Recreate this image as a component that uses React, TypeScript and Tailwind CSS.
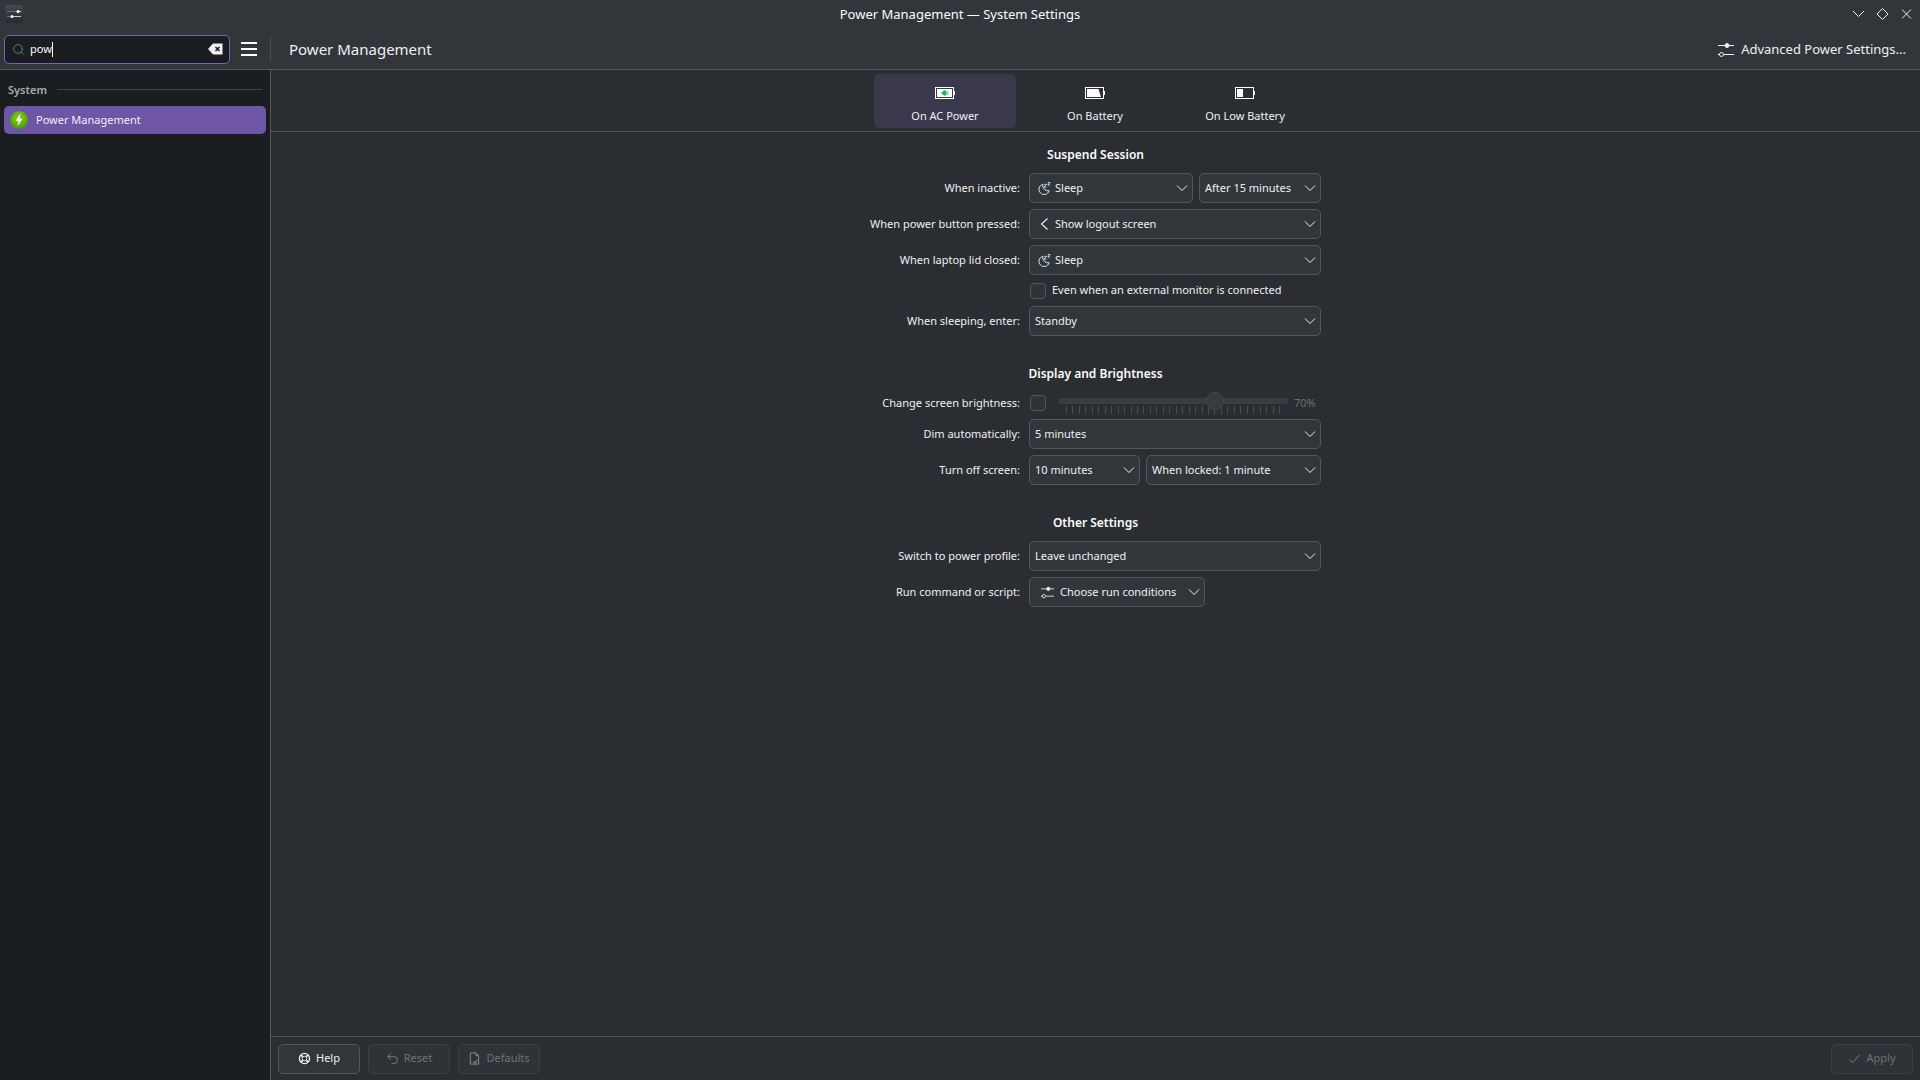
import React from "react";
import { Search } from "lucide-react";

const Chevron = () => (
  <svg width="12" height="8" viewBox="0 0 12 8" fill="none" stroke="#eff0f1" strokeWidth="1" className="shrink-0">
    <path d="M1 1.5 L6 6.5 L11 1.5" />
  </svg>
);

const SleepIcon = () => (
  <svg width="13" height="13" viewBox="0 0 14 14" fill="none" stroke="#eff0f1" strokeWidth="1" className="shrink-0">
    <path d="M5 2.5 A5.6 5.6 0 1 0 12 9.5 A6.2 6.2 0 0 1 5 2.5 Z" />
    <path d="M6.5 2.5 H9 L6.5 5.5 H9" strokeWidth="0.9" />
    <path d="M10.5 0.7 H13 L10.5 3.2 H13" strokeWidth="0.9" />
  </svg>
);

const BackIcon = () => (
  <svg width="14" height="14" viewBox="0 0 14 14" fill="none" stroke="#eff0f1" strokeWidth="1.1" className="shrink-0">
    <path d="M10.5 1.5 L4.5 7 L10.5 12.5" />
  </svg>
);

const Sliders = ({ size = 16 }: { size?: number }) => (
  <svg width={size} height={size} viewBox="0 0 16 16" fill="none" stroke="#eff0f1" strokeWidth="1" className="shrink-0">
    <path d="M0 3.5 H16 M0 12.5 H2 M6 12.5 H16" />
    <circle cx="9" cy="3.5" r="2" fill="#eff0f1" />
    <circle cx="3.5" cy="12.5" r="2" fill="none" />
  </svg>
);

const Battery = ({ level }: { level: "ac" | "full" | "low" }) => (
  <svg width="20" height="12" viewBox="0 0 20 12" className="shrink-0">
    <rect x="0.5" y="0.5" width="18" height="11" fill="none" stroke="#fcfcfc" />
    <rect x="19" y="4" width="1" height="4" fill="#fcfcfc" />
    {level === "ac" && (
      <>
        <rect x="2" y="2" width="15" height="8" fill="#fcfcfc" />
        <path d="M6 6 L9 3.5 H11 V4.5 H13.5 V5.5 H11 V6.5 H13.5 V7.5 H11 V8.5 H9 Z" fill="#27ae60" />
      </>
    )}
    {level === "full" && <path d="M2 2 H13.5 L16 10 H2 Z" fill="#fcfcfc" />}
    {level === "low" && <rect x="2" y="2" width="6" height="8" fill="#fcfcfc" />}
  </svg>
);

const Combo = ({
  text,
  icon,
  className,
}: {
  text: string;
  icon?: React.ReactNode;
  className: string;
}) => (
  <div className={`h-[30px] flex items-center rounded-[5px] border border-[#53575b] bg-[#31363b] pr-[1px] ${className}`}>
    {icon}
    <span className="flex-1 whitespace-nowrap text-[#eff0f1]">{text}</span>
    <span className="w-[18px] flex justify-center">
      <Chevron />
    </span>
  </div>
);

const Row = ({ label, children }: { label: string; children: React.ReactNode }) => (
  <div className="flex items-center gap-[9px]">
    <div className="w-[749px] text-right whitespace-nowrap text-[#eff0f1]">{label}</div>
    {children}
  </div>
);

const Heading = ({ text, className }: { text: string; className: string }) => (
  <div className={`h-[18px] flex items-center justify-center font-semibold text-[12px] text-[#fcfcfc] ${className}`}>{text}</div>
);

const Checkbox = () => (
  <div className="h-[16px] w-[16px] ml-[1px] rounded-[4px] border border-[#53575b] bg-[#2f3338] shrink-0" />
);

const Tab = ({ label, level, active }: { label: string; level: "ac" | "full" | "low"; active?: boolean }) => (
  <div className={`w-[142px] h-[54px] rounded-[5px] flex flex-col items-center pt-[13px] ${active ? "bg-[#3a384c]" : ""}`}>
    <Battery level={level} />
    <div className="mt-[8px] text-[#eff0f1] leading-[18px]">{label}</div>
  </div>
);

const FooterButton = ({
  label,
  icon,
  disabled,
  className,
}: {
  label: string;
  icon: React.ReactNode;
  disabled?: boolean;
  className?: string;
}) => (
  <div
    className={`w-[82px] h-[30px] rounded-[5px] border flex items-center justify-center gap-[5px] ${
      disabled ? "border-[#3c4045] bg-[#2f3338] text-[#6e7276]" : "border-[#53575b] bg-[#31363b] text-[#eff0f1]"
    } ${className ?? ""}`}
  >
    {icon}
    <span>{label}</span>
  </div>
);

const Ticks = () => {
  const ticks = Array.from({ length: 34 });
  return (
    <div className="flex justify-between px-[8px] mt-[2px]">
      {ticks.map((_, i) => (
        <div key={i} className="w-px h-[8px] bg-[#494d51]" />
      ))}
    </div>
  );
};

export default function App() {
  return (
    <div className="h-screen w-screen overflow-hidden flex flex-col bg-[#2a2e32] text-[11px] text-[#eff0f1] font-['Noto_Sans',sans-serif]">
      {/* title bar */}
      <div className="h-[32px] shrink-0 bg-[#31363b] flex items-center relative">
        <div className="ml-[5px] mb-[4px] w-[18px] h-[18px] rounded-[2px] bg-gradient-to-b from-[#45484d] to-[#26292d] flex items-center justify-center">
          <svg width="14" height="14" viewBox="0 0 14 14">
            <path d="M0 4.5 H11" stroke="#7d57c1" strokeWidth="1" />
            <path d="M11 4.5 H14" stroke="#c8c8c8" strokeWidth="1" />
            <path d="M0 9.5 H5" stroke="#7d57c1" strokeWidth="1" />
            <path d="M5 9.5 H14" stroke="#c8c8c8" strokeWidth="1" />
            <circle cx="11" cy="4.5" r="1.5" fill="#fcfcfc" />
            <circle cx="5" cy="9.5" r="1.5" fill="#fcfcfc" />
          </svg>
        </div>
        <div className="flex-1 text-center text-[13px] text-[#fcfcfc] -ml-[23px] -mt-[3px]">Power Management — System Settings</div>
        <div className="absolute right-[0px] top-[0px] h-[28px] flex items-center">
          <svg width="72" height="28" viewBox="0 0 72 28" fill="none" stroke="#eff0f1" strokeWidth="1">
            <path d="M5 11 L10.5 16.5 L16 11" />
            <path d="M29 14 L34.5 8.5 L40 14 L34.5 19.5 Z" />
            <path d="M54 9.5 L63 18.5 M63 9.5 L54 18.5" />
          </svg>
        </div>
      </div>

      {/* toolbar */}
      <div className="h-[38px] shrink-0 bg-[#31363b] border-b border-[#53575b] flex items-center">
        <div className="ml-[4px] w-[226px] h-[29px] mb-[3px] rounded-[5px] border border-[#7d5fb8] bg-[#1b1e20] flex items-center pl-[7px] pr-[6px]">
          <Search size={13} strokeWidth={1.2} className="text-[#9a9d9f] shrink-0" />
          <span className="ml-[5px] text-[#fcfcfc]">pow</span>
          <span className="w-px h-[15px] bg-[#fcfcfc]" />
          <span className="flex-1" />
          <svg width="15" height="12" viewBox="0 0 15 12" className="shrink-0">
            <path d="M5 0.5 H14.5 V11.5 H5 L0 6 Z" fill="#eff0f1" />
            <path d="M7.5 4 L11.5 8 M11.5 4 L7.5 8" stroke="#1b1e20" strokeWidth="1.6" />
          </svg>
        </div>
        <div className="ml-[11px] mb-[3px] w-[16px] flex flex-col gap-[4px]">
          <div className="h-[2px] bg-[#fcfcfc]" />
          <div className="h-[2px] bg-[#fcfcfc]" />
          <div className="h-[2px] bg-[#fcfcfc]" />
        </div>
        <div className="ml-[13px] mb-[3px] w-px h-[26px] bg-[#4a4e52]" />
        <div className="ml-[18px] mb-[3px] text-[15px] text-[#eff0f1]">Power Management</div>
        <div className="flex-1" />
        <div className="mr-[14px] mb-[1px] flex items-center gap-[7px] text-[13px] text-[#eff0f1]">
          <Sliders size={16} />
          <span>Advanced Power Settings...</span>
        </div>
      </div>

      <div className="flex-1 flex min-h-0">
        {/* sidebar */}
        <aside className="w-[271px] shrink-0 bg-[#1b1e20] border-r border-[#53575b] pl-[4px] pr-[4px]">
          <div className="flex items-center h-[36px] pt-[3px] pl-[4px] pr-[4px] gap-[10px]">
            <span className="font-semibold text-[11px] text-[#a8abad] mt-[1px]">System</span>
            <div className="flex-1 h-px bg-[#3f4347]" />
          </div>
          <div className="w-[262px] h-[28px] rounded-[5px] bg-[#6f55a5] flex items-center pl-[6px] gap-[8px]">
            <svg width="18" height="18" viewBox="0 0 18 18" className="shrink-0">
              <defs>
                <radialGradient id="pwr" cx="50%" cy="40%" r="60%">
                  <stop offset="0%" stopColor="#8fd91c" />
                  <stop offset="100%" stopColor="#45980c" />
                </radialGradient>
              </defs>
              <circle cx="9" cy="9" r="9" fill="url(#pwr)" />
              <path d="M10.5 2.5 L5.5 10 H8.3 L7.5 15.5 L12.5 7.8 H9.7 Z" fill="#f2f8e8" />
            </svg>
            <span className="text-[#eff0f1]">Power Management</span>
          </div>
        </aside>

        {/* main */}
        <main className="flex-1 min-w-0 flex flex-col">
          <div className="h-[62px] shrink-0 border-b border-[#53575b] flex justify-center items-start pt-[4px] pr-[1px] gap-[8px]">
            <Tab label="On AC Power" level="ac" active />
            <Tab label="On Battery" level="full" />
            <Tab label="On Low Battery" level="low" />
          </div>

          <div className="flex-1 min-h-0 flex flex-col">
            <Heading text="Suspend Session" className="mt-[14px]" />
            <div className="mt-[9px] flex flex-col gap-[6px]">
              <Row label="When inactive:">
                <div className="flex gap-[6px]">
                  <Combo text="Sleep" icon={<span className="ml-[8px] mr-[4px]"><SleepIcon /></span>} className="w-[164px]" />
                  <Combo text="After 15 minutes" className="w-[122px] pl-[5px]" />
                </div>
              </Row>
              <Row label="When power button pressed:">
                <Combo text="Show logout screen" icon={<span className="ml-[7px] mr-[4px]"><BackIcon /></span>} className="w-[292px]" />
              </Row>
              <Row label="When laptop lid closed:">
                <Combo text="Sleep" icon={<span className="ml-[8px] mr-[4px]"><SleepIcon /></span>} className="w-[292px]" />
              </Row>
              <div className="h-[19px] flex items-center pl-[758px] gap-[6px]">
                <Checkbox />
                <span className="whitespace-nowrap">Even when an external monitor is connected</span>
              </div>
              <Row label="When sleeping, enter:">
                <Combo text="Standby" className="w-[292px] pl-[5px]" />
              </Row>
            </div>

            <Heading text="Display and Brightness" className="mt-[29px]" />
            <div className="mt-[10px] flex flex-col gap-[6px]">
              <Row label="Change screen brightness:">
                <div className="h-[20px] w-[292px] flex items-center">
                  <Checkbox />
                  <div className="ml-[12px] w-[230px] relative pt-[5px] h-[20px]">
                    <div className="h-[6px] rounded-full bg-[#393d42]" />
                    <div className="absolute left-[148px] -top-[1px] w-[18px] h-[18px] rounded-full bg-[#383c41] border border-[#44484c]" />
                    <Ticks />
                  </div>
                  <span className="ml-[6px] text-[#6a6e72] whitespace-nowrap">70%</span>
                </div>
              </Row>
              <Row label="Dim automatically:">
                <Combo text="5 minutes" className="w-[292px] pl-[5px]" />
              </Row>
              <Row label="Turn off screen:">
                <div className="flex gap-[6px]">
                  <Combo text="10 minutes" className="w-[111px] pl-[5px]" />
                  <Combo text="When locked: 1 minute" className="w-[175px] pl-[5px]" />
                </div>
              </Row>
            </div>

            <Heading text="Other Settings" className="mt-[29px]" />
            <div className="mt-[9px] flex flex-col gap-[6px]">
              <Row label="Switch to power profile:">
                <Combo text="Leave unchanged" className="w-[292px] pl-[5px]" />
              </Row>
              <Row label="Run command or script:">
                <Combo text="Choose run conditions" icon={<span className="ml-[11px] mr-[6px]"><Sliders size={13} /></span>} className="w-[176px]" />
              </Row>
            </div>
          </div>

          {/* footer */}
          <div className="h-[44px] shrink-0 border-t border-[#53575b] flex items-center gap-[8px] px-[7px]">
            <FooterButton
              label="Help"
              icon={
                <svg width="13" height="13" viewBox="0 0 14 14" fill="none" stroke="#eff0f1">
                  <circle cx="7" cy="7" r="5.5" strokeWidth="1.4" />
                  <circle cx="7" cy="7" r="2.5" strokeWidth="1" />
                  <path d="M3 3 L5 5 M11 3 L9 5 M3 11 L5 9 M11 11 L9 9" strokeWidth="1.8" />
                </svg>
              }
            />
            <FooterButton
              label="Reset"
              disabled
              icon={
                <svg width="13" height="13" viewBox="0 0 14 14" fill="none" stroke="#7d8185" strokeWidth="1">
                  <path d="M2 5 H8.5 A3.7 3.7 0 0 1 8.5 12.5 H6" />
                  <path d="M5 1.5 L1.8 5 L5 8" />
                </svg>
              }
            />
            <FooterButton
              label="Defaults"
              disabled
              icon={
                <svg width="13" height="13" viewBox="0 0 14 14" fill="none" stroke="#8b8f93" strokeWidth="1">
                  <path d="M2.5 1 H8.5 L11.5 4 V13 H2.5 Z" />
                  <path d="M8.5 1 V4 H11.5" />
                  <path d="M9 8 A2 2 0 0 1 9 11 H6.5 M7.5 9.5 L6 11 L7.5 12.5" />
                </svg>
              }
            />
            <div className="flex-1" />
            <FooterButton
              label="Apply"
              disabled
              className="w-[81px]"
              icon={
                <svg width="13" height="13" viewBox="0 0 14 14" fill="none" stroke="#7d8185" strokeWidth="1">
                  <path d="M1.5 8 L5 11.5 L12.5 3" />
                </svg>
              }
            />
          </div>
        </main>
      </div>
    </div>
  );
}
